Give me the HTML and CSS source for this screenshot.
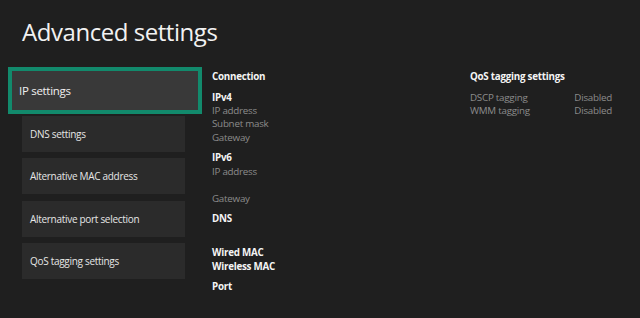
FILE: index.html
```html
<!DOCTYPE html>
<html lang="en">
<head>
    <meta charset="UTF-8">
    <meta name="viewport" content="width=device-width, initial-scale=1.0">
    <title>Advanced settings</title>
    <link rel="stylesheet" href="styles.css">
</head>
<body>
    <h1 class="title">Advanced settings</h1>

    <div class="layout">
        <nav class="menu">
            <div class="tile selected">IP settings</div>
            <div class="tile">DNS settings</div>
            <div class="tile">Alternative MAC address</div>
            <div class="tile">Alternative port selection</div>
            <div class="tile">QoS tagging settings</div>
        </nav>

        <div class="details">
            <div class="group">
                <div class="label">Connection</div>
            </div>
            <div class="group">
                <div class="label">IPv4</div>
                <div class="value">IP address</div>
                <div class="value">Subnet mask</div>
                <div class="value">Gateway</div>
            </div>
            <div class="group">
                <div class="label">IPv6</div>
                <div class="value">IP address</div>
                <div class="value blank"></div>
                <div class="value">Gateway</div>
            </div>
            <div class="group">
                <div class="label">DNS</div>
                <div class="value blank"></div>
            </div>
            <div class="group">
                <div class="label">Wired MAC</div>
                <div class="label">Wireless MAC</div>
            </div>
            <div class="group">
                <div class="label">Port</div>
            </div>
        </div>

        <div class="qos">
            <div class="group">
                <div class="label">QoS tagging settings</div>
            </div>
            <div class="group">
                <div class="row">
                    <span class="value">DSCP tagging</span>
                    <span class="value">Disabled</span>
                </div>
                <div class="row">
                    <span class="value">WMM tagging</span>
                    <span class="value">Disabled</span>
                </div>
            </div>
        </div>
    </div>
</body>
</html>
```

FILE: styles.css
```css
* {
    margin: 0;
    padding: 0;
    box-sizing: border-box;
}

body {
    font-family: 'Open Sans', 'Noto Sans', sans-serif;
    background: #1f1f1f;
    color: #fff;
    width: 640px;
    height: 318px;
    overflow: hidden;
}

.title {
    font-weight: 400;
    font-size: 24px;
    line-height: 30px;
    color: #f2f2f2;
    padding: 17px 0 0 22px;
    letter-spacing: -0.45px;
}

.layout {
    display: flex;
    margin-top: 25px;
    padding-left: 22px;
}

.menu {
    width: 163px;
    display: flex;
    flex-direction: column;
    gap: 6.5px;
}

.tile {
    height: 36px;
    background: #2b2b2b;
    color: #e6e6e6;
    font-size: 10px;
    letter-spacing: -0.3px;
    display: flex;
    align-items: center;
    padding-left: 8px;
}

.tile.selected {
    height: 47px;
    margin: -5px -17px -5px -14px;
    background: #393939;
    border: 4px solid #128a6c;
    font-size: 11.5px;
    letter-spacing: -0.3px;
    padding-left: 7px;
    color: #f0f0f0;
}

.details {
    margin-left: 27px;
    width: 258px;
    margin-top: -2px;
}

.qos {
    width: 142px;
    margin-top: -2px;
}

.group {
    font-size: 9.8px;
    letter-spacing: -0.25px;
    line-height: 13.4px;
    margin-bottom: 7.2px;
}

.label {
    font-weight: 700;
    color: #f4f4f4;
}

.value {
    color: #8c8c8c;
}

.blank {
    height: 13.4px;
}

.row {
    display: flex;
    justify-content: space-between;
}
```
